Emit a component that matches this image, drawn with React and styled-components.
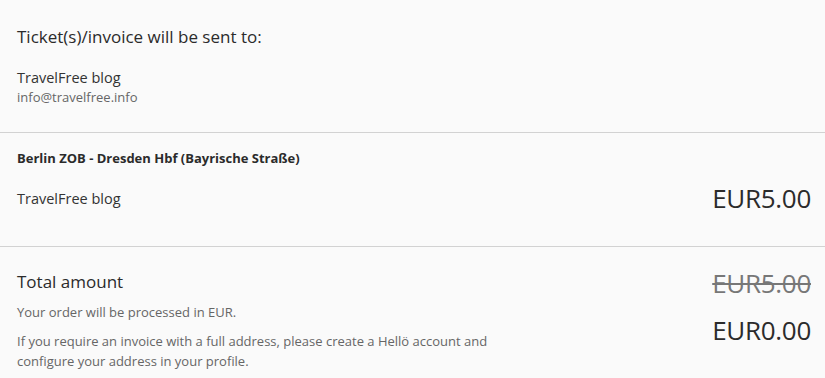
import React from "react"
import styled, { createGlobalStyle } from "styled-components"

const GlobalStyle = createGlobalStyle`
	body {
		margin: 0;
		background: #fafafa;
		font-family: "Open Sans", "Noto Sans", sans-serif;
		color: #2b2b2b;
	}
`

const Page = styled.div`
	width: 825px;
	height: 378px;
	overflow: hidden;
	background: #fafafa;
`

const Section = styled.section`
	padding: ${(p) => p.$pad || "0 14px 0 17px"};
	border-bottom: ${(p) => (p.$divider ? "1px solid #d2d2d2" : "none")};
`

const Heading = styled.h2`
	margin: 0;
	font-size: 17px;
	font-weight: 400;
	line-height: 24px;
	color: #2b2b2b;
`

const Name = styled.div`
	font-size: 14.5px;
	line-height: 20px;
	color: #333;
	margin-top: ${(p) => p.$top || "0"};
`

const Email = styled.div`
	font-size: 13px;
	line-height: 18px;
	color: #666;
`

const Route = styled.div`
	font-size: 13px;
	font-weight: 700;
	line-height: 18px;
	color: #2b2b2b;
`

const Row = styled.div`
	display: flex;
	justify-content: space-between;
	align-items: flex-start;
	margin-top: ${(p) => p.$top || "0"};
`

const Price = styled.div`
	font-size: 26px;
	line-height: ${(p) => p.$lh || "32px"};
	margin-top: ${(p) => p.$top || "0"};
	font-weight: 400;
	color: ${(p) => (p.$old ? "#777" : "#2b2b2b")};
	text-decoration: ${(p) => (p.$old ? "line-through" : "none")};
	text-decoration-thickness: 2px;
	letter-spacing: -0.3px;
`

const Note = styled.p`
	margin: ${(p) => p.$top || "0"} 0 0;
	max-width: 500px;
	font-size: 13px;
	line-height: 20px;
	color: #666;
`

const Column = styled.div`
	display: flex;
	flex-direction: column;
	align-items: ${(p) => (p.$right ? "flex-end" : "flex-start")};
`

function App() {
	return (
		<Page>
			<GlobalStyle />
			<Section $divider $pad="25px 14px 26px 17px">
				<Heading>Ticket(s)/invoice will be sent to:</Heading>
				<Name $top="19px">TravelFree blog</Name>
				<Email>info@travelfree.info</Email>
			</Section>
			<Section $divider $pad="16px 14px 32px 17px">
				<Route>Berlin ZOB - Dresden Hbf (Bayrische Straße)</Route>
				<Row $top="15px">
					<Name $top="7px">TravelFree blog</Name>
					<Price>EUR5.00</Price>
				</Row>
			</Section>
			<Section $pad="23px 14px 0 17px">
				<Row>
					<Column>
						<Heading>Total amount</Heading>
						<Note $top="8px">Your order will be processed in EUR.</Note>
						<Note $top="9px">
							If you require an invoice with a full address, please create a Hellö
							account and configure your address in your profile.
						</Note>
					</Column>
					<Column $right>
						<Price $old $lh="26px">EUR5.00</Price>
						<Price $lh="26px" $top="21px">EUR0.00</Price>
					</Column>
				</Row>
			</Section>
		</Page>
	)
}

export default App
